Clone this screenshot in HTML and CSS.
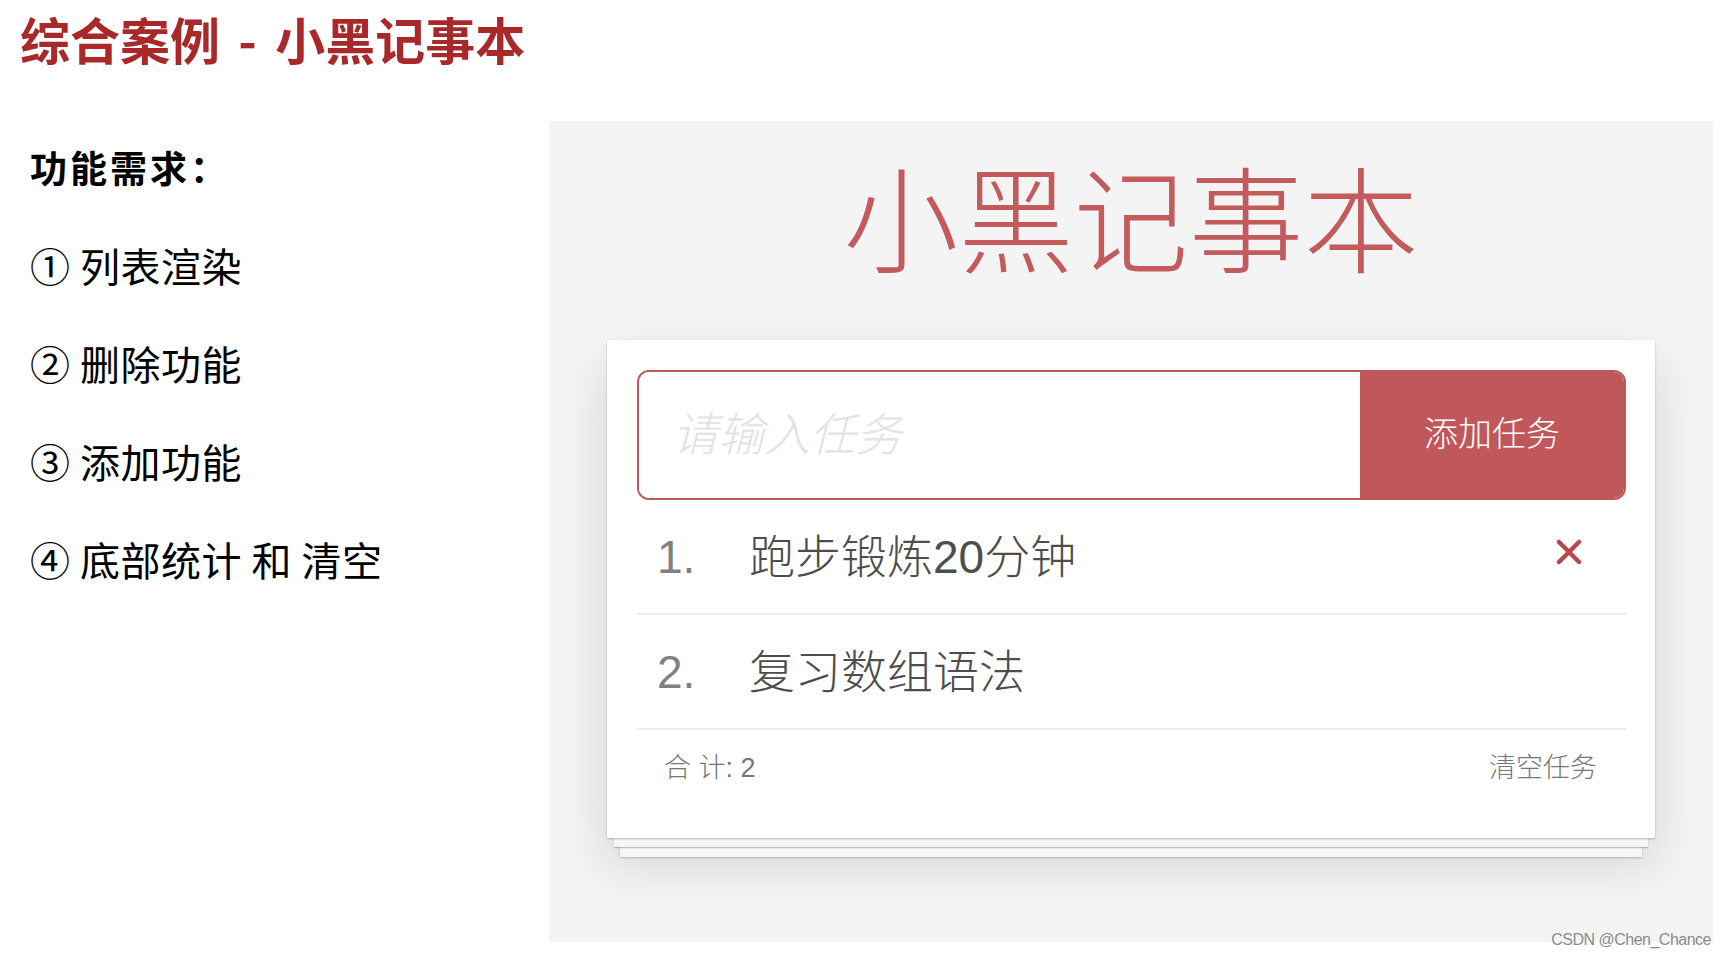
FILE: index.html
```html
<!DOCTYPE html>
<html lang="zh-CN">
<head>
    <meta charset="UTF-8">
    <meta name="viewport" content="width=device-width, initial-scale=1.0">
    <title>综合案例 - 小黑记事本</title>
    <link rel="stylesheet" href="styles.css">
</head>
<body>
<div class="slide">
    <h1 class="slide-title">综合案例 - 小黑记事本</h1>

    <div class="slide-body">
        <div class="needs">
            <h2>功能需求：</h2>
            <ul>
                <li>① 列表渲染</li>
                <li>② 删除功能</li>
                <li>③ 添加功能</li>
                <li>④ 底部统计 和 清空</li>
            </ul>
        </div>

        <div class="demo">
            <h1 class="app-title">小黑记事本</h1>

            <section class="todo">
                <form class="new-task">
                    <input type="text" class="task-input" placeholder="请输入任务">
                    <button type="button" class="add-btn">添加任务</button>
                </form>

                <ul class="task-list">
                    <li>
                        <span class="index">1.</span>
                        <span class="text">跑步锻炼20分钟</span>
                        <button class="del" type="button">
                            <svg width="26" height="26" viewBox="0 0 26 26">
                                <path d="M3 3 L23 23 M23 3 L3 23" stroke="#b9474c" stroke-width="4.5" stroke-linecap="round"/>
                            </svg>
                        </button>
                    </li>
                    <li>
                        <span class="index">2.</span>
                        <span class="text">复习数组语法</span>
                    </li>
                </ul>

                <footer class="todo-footer">
                    <span class="count">合 计: 2</span>
                    <a href="#" class="clear">清空任务</a>
                </footer>
            </section>
        </div>
    </div>

    <span class="watermark">CSDN @Chen_Chance</span>
</div>
</body>
</html>
```

FILE: styles.css
```css
*{
    margin: 0;
    padding: 0;
    box-sizing: border-box;
}
body{
    background: #fff;
    font-family: "Noto Sans CJK SC", sans-serif;
}
.slide{
    position: relative;
    width: 1727px;
    height: 957px;
    overflow: hidden;
}
.slide-title{
    height: 121px;
    padding: 8px 0 0 20px;
    font-size: 50px;
    line-height: 60px;
    font-weight: 700;
    word-spacing: 7px;
    color: #a9292b;
}
.slide-body{
    display: flex;
}

/* 左侧需求列表 */
.needs{
    width: 549px;
    padding: 24px 0 0 30px;
    color: #000;
}
.needs h2{
    font-size: 37px;
    line-height: 44px;
    font-weight: 700;
    letter-spacing: 3px;
}
.needs ul{
    list-style: none;
    margin-top: 52px;
}
.needs li{
    font-size: 40px;
    line-height: 48px;
    letter-spacing: 0.5px;
}
.needs li + li{
    margin-top: 50px;
}

/* 右侧记事本截图 */
.demo{
    width: 1164px;
    height: 821px;
    padding-top: 28px;
    background: #f4f4f4;
}
.app-title{
    font-size: 115px;
    line-height: 130px;
    font-weight: 300;
    text-align: center;
    color: #c35a5c;
    margin-bottom: 61px;
}
.todo{
    width: 1048px;
    margin: 0 auto;
    padding: 30px 29px 0 30px;
    background: #fff;
    box-shadow: 0 1px 2px rgba(0,0,0,.25),
                0 16px 0 -7px #f6f6f6,
                0 17px 1px -7px rgba(0,0,0,.22),
                0 32px 0 -13px #f6f6f6,
                0 33px 2px -13px rgba(0,0,0,.22),
                0 25px 50px rgba(0,0,0,.13);
}
.new-task{
    display: flex;
    height: 130px;
    border: 2px solid #c0575a;
    border-radius: 12px;
    overflow: hidden;
}
.task-input{
    flex: 1;
    border: none;
    outline: none;
    padding: 0 0 8px 33px;
    font-family: "Noto Sans CJK SC", sans-serif;
    font-size: 46px;
    font-weight: 300;
    font-style: italic;
    color: #4d4d4d;
    background: #fff;
}
.task-input::placeholder{
    color: #e3e3e3;
}
.add-btn{
    width: 264px;
    padding-bottom: 8px;
    border: none;
    background: #c0575a;
    color: #fff;
    font-family: "Noto Sans CJK SC", sans-serif;
    font-size: 34px;
    font-weight: 300;
    cursor: pointer;
}

.task-list{
    list-style: none;
}
.task-list li{
    display: flex;
    align-items: center;
    height: 115px;
    padding-left: 20px;
    border-bottom: 2px solid #ececec;
    font-family: "Liberation Sans", "Noto Sans CJK SC", sans-serif;
    font-size: 46px;
    font-weight: 300;
    line-height: 1;
}
.task-list .index{
    width: 92px;
    color: #808080;
}
.task-list .text{
    color: #4d4d4d;
}
.task-list .del{
    display: flex;
    margin: 0 44px 10px auto;
    border: none;
    background: none;
    cursor: pointer;
}

.todo-footer{
    display: flex;
    justify-content: space-between;
    height: 108px;
    padding: 22px 29px 0 27px;
    font-family: "Liberation Sans", "Noto Sans CJK SC", sans-serif;
    font-size: 27px;
    font-weight: 300;
    line-height: 32px;
    color: #777;
}
.todo-footer .clear{
    color: #777;
    text-decoration: none;
}

.watermark{
    position: absolute;
    right: 16px;
    bottom: 8px;
    font-family: "Liberation Sans Narrow", "Liberation Sans", sans-serif;
    font-size: 16px;
    letter-spacing: -0.5px;
    color: #8a8a8a;
    text-shadow: 0 0 2px #fff;
}
```
